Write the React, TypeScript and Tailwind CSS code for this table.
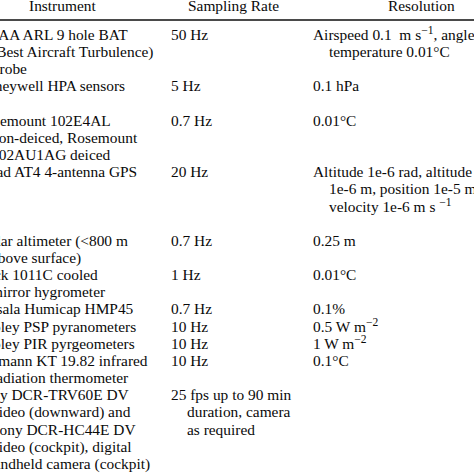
import React from 'react';

type Line = React.ReactNode;

interface Row {
  instrument: Line[];
  rate: Line[];
  resolution: Line[];
  gap?: boolean;
}

const rows: Row[] = [
  {
    instrument: ['NOAA ARL 9 hole BAT', '(Best Aircraft Turbulence)', 'Probe'],
    rate: ['50 Hz'],
    resolution: [
      <>Airspeed 0.1&nbsp; m s<sup>−1</sup>, angles 0.1°,</>,
      'temperature 0.01°C',
    ],
  },
  {
    instrument: ['Honeywell HPA sensors'],
    rate: ['5 Hz'],
    resolution: ['0.1 hPa'],
    gap: true,
  },
  {
    instrument: ['Rosemount 102E4AL', 'non-deiced, Rosemount', '102AU1AG deiced'],
    rate: ['0.7 Hz'],
    resolution: ['0.01°C'],
  },
  {
    instrument: ['Javad AT4 4-antenna GPS'],
    rate: ['20 Hz'],
    resolution: [
      'Altitude 1e-6 rad, altitude',
      '1e-6 m, position 1e-5 m,',
      <>velocity 1e-6 m s <sup>−1</sup></>,
    ],
    gap: true,
  },
  {
    instrument: ['Radar altimeter (<800 m', 'above surface)'],
    rate: ['0.7 Hz'],
    resolution: ['0.25 m'],
  },
  {
    instrument: ['Buck 1011C cooled', 'mirror hygrometer'],
    rate: ['1 Hz'],
    resolution: ['0.01°C'],
  },
  {
    instrument: ['Vaisala Humicap HMP45'],
    rate: ['0.7 Hz'],
    resolution: ['0.1%'],
  },
  {
    instrument: ['Eppley PSP pyranometers'],
    rate: ['10 Hz'],
    resolution: [<>0.5 W m<sup>−2</sup></>],
  },
  {
    instrument: ['Eppley PIR pyrgeometers'],
    rate: ['10 Hz'],
    resolution: [<>1 W m<sup>−2</sup></>],
  },
  {
    instrument: ['Heimann KT 19.82 infrared', 'radiation thermometer'],
    rate: ['10 Hz'],
    resolution: ['0.1°C'],
  },
  {
    instrument: [
      'Sony DCR-TRV60E DV',
      'video (downward) and',
      'Sony DCR-HC44E DV',
      'video (cockpit), digital',
      'handheld camera (cockpit)',
    ],
    rate: ['25 fps up to 90 min', 'duration, camera', 'as required'],
    resolution: [],
  },
];

// first line flush, wrapped lines hang-indented
const Cell = ({ lines, gap, indent, last }: { lines: Line[]; gap?: boolean; indent: string; last?: boolean }) => (
  <div className={gap ? 'pb-[17.15px]' : ''}>
    {lines.map((line, i) => (
      <div
        key={i}
        className={
          i === 0
            ? 'whitespace-nowrap'
            : last && i === lines.length - 1
              ? 'whitespace-nowrap pl-[10px]'
              : `whitespace-nowrap ${indent}`
        }
      >
        {line}
      </div>
    ))}
  </div>
);

export default function App() {
  return (
    <div
      className="w-[474px] h-[474px] overflow-hidden bg-white text-[#0a0a0a] text-[15.4px] leading-[17.15px]"
      style={{ fontFamily: '"Liberation Serif", "Times New Roman", serif' }}
    >
      <div className="-ml-[24px] w-[498px]">
        <div className="grid grid-cols-[195px_142px_161px] leading-[12px] pb-[7px] border-b-2 border-[#4a4a4a]">
          <div className="pl-[53px] whitespace-nowrap">Instrument</div>
          <div className="pl-[17px] whitespace-nowrap">Sampling Rate</div>
          <div className="pl-[75px] whitespace-nowrap">Resolution</div>
        </div>
        <div className="grid grid-cols-[195px_142px_161px] pt-[5px]">
          {rows.map((row, r) => (
            <React.Fragment key={r}>
              <Cell lines={row.instrument} gap={row.gap} indent="pl-[15px]" last={r === rows.length - 1} />
              <Cell lines={row.rate} gap={row.gap} indent="pl-[16px]" />
              <Cell lines={row.resolution} gap={row.gap} indent="pl-[16px]" />
            </React.Fragment>
          ))}
        </div>
      </div>
    </div>
  );
}
